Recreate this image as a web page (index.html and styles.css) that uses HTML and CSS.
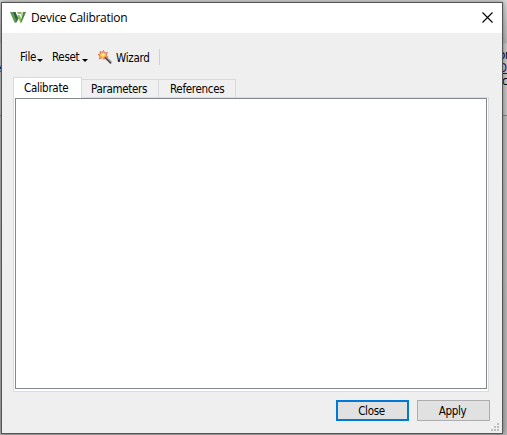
FILE: index.html
```
<!DOCTYPE html>
<html lang="en">
<head>
<meta charset="utf-8">
<title>Device Calibration</title>
<link rel="stylesheet" href="styles.css">
</head>
<body>
<div class="behind-left">e</div>
<div class="behind"><span>or</span><span class="link">Di</span><span>c</span></div>
<main class="window">
  <header class="titlebar">
    <svg class="logo" width="16" height="12" viewBox="0 0 16 12">
      <path d="M0 1h3l4 8-1.500 2.500H4.500z" fill="#5c9a50"/>
      <path d="M3 1h2.500L8 7l-1.500 3z" fill="#285c45"/>
      <path d="M8 4.500L5 11.500h1.500L9 7z" fill="#3f7d48"/>
      <path d="M7.500 4h2l2.500 5-1 2.500H10z" fill="#8fc050"/>
      <path d="M7 1h5l-1 2H8z" fill="#8fbd55"/>
      <path d="M13 1h3l-4.500 10.500h-1z" fill="#4d8a45"/>
      <path d="M11 2.500h1.500L11.500 6z" fill="#a9cb75"/>
    </svg>
    <h1>Device Calibration</h1>
    <svg class="x" width="11" height="11" viewBox="0 0 11 11"><path d="M.5.5l10 10M10.500.5l-10 10" stroke="#000" stroke-width="1.1"/></svg>
  </header>
  <nav class="toolbar">
    <span class="file">File</span><i class="arrow"></i>
    <span class="reset">Reset</span><i class="arrow"></i>
    <svg class="wand" width="15" height="15" viewBox="0 0 15 15">
      <path d="M7 6l6.500 6.500" stroke="#aaa" stroke-width="2"/>
      <path d="M6.500 7l6.500 6.500" stroke="#444" stroke-width="1.5"/>
      <path d="M5.500.5l1 2.500 3-.5-1.500 2.500 1.500 2-3 0-.5 2.500-2-2-2.500 1.500.5-3L0 4.500l2.500-.5-.5-2.500 2.500 1z" fill="#ffc850" stroke="#dc5c40" stroke-width=".8"/>
      <path d="M3.500 3.500h3v2h-3z" fill="#fff3a0"/>
    </svg>
    <span class="wizard">Wizard</span><i class="sep"></i>
  </nav>
  <div class="tabs">
    <div class="tab active">Calibrate</div>
    <div class="tab params">Parameters</div>
    <div class="tab refs">References</div>
  </div>
  <section class="pane"><div class="content"></div></section>
  <footer class="actions">
    <button class="primary">Close</button>
    <button>Apply</button>
  </footer>
  <svg class="grip" width="8" height="8" viewBox="0 0 8 8" fill="#bfbfbf"><path d="M6 0h2v2H6zM3 3h2v2H3zM6 3h2v2H6zM0 6h2v2H0zM3 6h2v2H3zM6 6h2v2H6z"/></svg>
</main>
</body>
</html>
```
FILE: styles.css
```
* { box-sizing: border-box; }
body {
  margin: 0;
  width: 507px;
  height: 435px;
  padding: 2px 0 0 1px;
  overflow: hidden;
  position: relative;
  background: linear-gradient(#d8d8d8 0, #c6c6c6 20px, #b4b4b4 43px, #c9c9c9 44px, #c4c4c4 115px, #868686 115px, #868686 116px, #bdbdbd 116px, #b4b4b4 100%);
  font: 11.5px/14px "DejaVu Sans Condensed", "DejaVu Sans", sans-serif;
  font-stretch: condensed;
  letter-spacing: -.3px;
  color: #000;
}
.behind-left { position: absolute; left: -5px; top: 61px; }
.behind {
  position: absolute;
  left: 499px;
  top: 49px;
  display: flex;
  flex-direction: column;
  line-height: 13px;
}
.behind span:last-child { padding-left: 3px; }
.link { color: #1a1a80; text-decoration: underline; }
.window {
  position: relative;
  width: 502px;
  height: 432px;
  background: #efefef;
  border: 1px solid #555;
  box-shadow: 0 0 5px rgba(0, 0, 0, .45);
}
.titlebar {
  height: 30px;
  background: #fff;
  display: flex;
  align-items: center;
  padding: 0 9px 0 8px;
}
.logo { margin-top: -2px; }
h1 {
  margin: 0 auto 0 5px;
  font: 12px/16px "Open Sans", "Noto Sans", sans-serif;
  letter-spacing: -.27px;
}
.x { margin-top: -2px; }
.toolbar {
  height: 44px;
  padding: 15px 0 0 18px;
  display: flex;
  align-items: flex-start;
}
.toolbar span { margin-top: 2px; }
.arrow {
  border: 3px solid transparent;
  border-top-color: #000;
  border-bottom: 0;
  margin: 11px 0 0;
}
.file { width: 17px; }
.reset { width: 30px; margin-left: 9px; }
.wand { margin: 2px 0 0 10px; }
.toolbar .wizard { margin: 3px 0 0 3px; width: 35px; }
.sep { width: 1px; height: 16px; background: #d0d0d0; margin: 1px 0 0 8px; }
.tabs {
  height: 20px;
  padding-left: 11px;
  display: flex;
  align-items: flex-end;
  position: relative;
}
.tab {
  height: 18px;
  border: 1px solid #d9d9d9;
  border-left: 0;
  border-bottom: 0;
  padding-top: 2px;
  background: #f0f0f0;
}
.active { width: 69px; height: 21px; border-left: 1px solid #d9d9d9; background: #fff; padding: 3px 0 0 10px; margin-bottom: -1px; z-index: 1; }
.params { width: 77px; padding-left: 9px; }
.refs { width: 77px; padding-left: 11px; }
.pane {
  margin: 0 13px 0 11px;
  width: 476px;
  height: 295px;
  border: 1px solid #dcdcdc;
  background: #fff;
  padding: 0 1px 2px;
}
.content { height: 291px; border: 1px solid #828790; background: #fff; }
.actions {
  display: flex;
  justify-content: flex-end;
  gap: 8px;
  padding: 8px 12px 0 0;
}
button {
  width: 73px;
  height: 21px;
  padding: 1px 2px 0 0;
  border: 1px solid #adadad;
  background: #e1e1e1;
  color: #000;
  font: inherit;
  letter-spacing: inherit;
  line-height: 14px;
}
.primary { border: 2px solid #0078d7; }
.grip { position: absolute; right: 3px; bottom: 2px; }
```
